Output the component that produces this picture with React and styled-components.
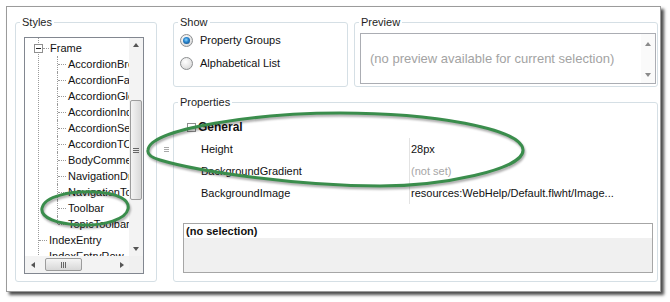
import React from 'react';
import styled, { createGlobalStyle, css } from 'styled-components';

const GlobalStyle = createGlobalStyle`
  html, body {
    margin: 0;
    padding: 0;
    background: #fff;
  }
  body {
    font-family: "Liberation Sans", Arial, sans-serif;
    font-size: 11px;
    color: #111;
  }
  * {
    box-sizing: border-box;
  }
`;

const Stage = styled.div`
  position: relative;
  width: 670px;
  height: 302px;
  padding: 6px 0 0 6px;
  overflow: hidden;
`;

const Window = styled.div`
  width: 655px;
  height: 286px;
  border: 1px solid #9b9b9b;
  background: #fff;
  box-shadow: 3px 3px 3px rgba(0, 0, 0, 0.7);
  display: grid;
  grid-template-columns: 142px 1fr;
  column-gap: 16px;
  padding: 15px 2px 9px 8px;
`;

const Group = styled.div`
  position: relative;
  border: 1px solid #d5dfe5;
  border-radius: 3px;
`;

const Legend = styled.span`
  position: absolute;
  top: -7px;
  left: 4px;
  padding: 0 2px;
  background: #fff;
  line-height: 13px;
  color: #1e1e1e;
`;

/* ---------- styles tree ---------- */

const StylesGroup = styled(Group)`
  padding: 14px 0 0 8px;
`;

const TreeBox = styled.div`
  width: 120px;
  height: 237px;
  border: 1px solid #828790;
  display: grid;
  grid-template-columns: 1fr 14px;
  grid-template-rows: 1fr 17px;
`;

const TreeList = styled.div`
  overflow: hidden;
  padding-top: 2px;
  background-image: linear-gradient(#9a9a9a 50%, transparent 50%);
  background-size: 1px 2px;
  background-repeat: repeat-y;
  background-position: 13px 0;
`;

const Row = styled.div`
  position: relative;
  height: 16px;
  line-height: 16px;
  white-space: nowrap;
  color: #111;
  padding-left: ${p => p.$indent}px;

  &::before {
    content: '';
    position: absolute;
    top: 8px;
    left: ${p => p.$stub}px;
    width: ${p => p.$stubW}px;
    border-top: 1px dotted #9a9a9a;
  }
`;

const ChildRow = styled(Row)`
  &::after {
    content: '';
    position: absolute;
    left: 32px;
    top: 0;
    height: ${p => (p.$last ? '8px' : '16px')};
    border-left: 1px dotted #9a9a9a;
  }
`;

const Expander = styled.span`
  position: absolute;
  left: ${p => p.$left}px;
  top: ${p => p.$top}px;
  width: 9px;
  height: 9px;
  border: 1px solid #8f8f8f;
  background: #fff;

  &::after {
    content: '';
    position: absolute;
    left: 1px;
    top: 3px;
    width: 5px;
    height: 1px;
    background: #222;
  }
`;

const VScroll = styled.div`
  display: flex;
  flex-direction: column;
  background: #f3f3f3;
`;

const HScroll = styled.div`
  display: flex;
  background: #f3f3f3;
`;

const Corner = styled.div`
  background: #f0f0f0;
`;

const ScrollButton = styled.div`
  flex: 0 0 ${p => p.$size}px;
  display: flex;
  align-items: center;
  justify-content: center;
  margin-left: ${p => (p.$end ? 'auto' : '0')};
`;

const Arrow = styled.span`
  width: 0;
  height: 0;
  ${p =>
    p.$dir === 'up' &&
    css`
      border-left: 3.5px solid transparent;
      border-right: 3.5px solid transparent;
      border-bottom: 4px solid ${p.$color || '#555'};
    `}
  ${p =>
    p.$dir === 'down' &&
    css`
      border-left: 3.5px solid transparent;
      border-right: 3.5px solid transparent;
      border-top: 4px solid ${p.$color || '#555'};
    `}
  ${p =>
    p.$dir === 'left' &&
    css`
      border-top: 3.5px solid transparent;
      border-bottom: 3.5px solid transparent;
      border-right: 4px solid ${p.$color || '#555'};
    `}
  ${p =>
    p.$dir === 'right' &&
    css`
      border-top: 3.5px solid transparent;
      border-bottom: 3.5px solid transparent;
      border-left: 4px solid ${p.$color || '#555'};
    `}
`;

const Track = styled.div`
  flex: 1;
  display: flex;
  flex-direction: ${p => (p.$vertical ? 'column' : 'row')};
  padding: ${p => (p.$vertical ? '48px 1px 0' : '2px 0 1px 5px')};
`;

const Thumb = styled.div`
  display: flex;
  align-items: center;
  justify-content: center;
  border: 1px solid #9c9c9c;
  border-radius: 2px;
  width: ${p => (p.$vertical ? '12px' : '37px')};
  height: ${p => (p.$vertical ? '100px' : '13px')};
  background: ${p =>
    p.$vertical
      ? 'linear-gradient(to right, #f4f4f4, #d8d8d8)'
      : 'linear-gradient(to bottom, #f4f4f4, #d8d8d8)'};
`;

const Grip = styled.span`
  width: ${p => (p.$vertical ? '6px' : '5px')};
  height: ${p => (p.$vertical ? '5px' : '6px')};
  background-image: ${p =>
    p.$vertical
      ? 'linear-gradient(#666 1px, transparent 1px)'
      : 'linear-gradient(to right, #666 1px, transparent 1px)'};
  background-size: ${p => (p.$vertical ? '6px 2px' : '2px 6px')};
`;

/* ---------- right side ---------- */

const RightCol = styled.div`
  display: flex;
  flex-direction: column;
  gap: 15px;
`;

const TopRow = styled.div`
  display: flex;
  gap: 6px;
  height: 65px;
`;

const ShowGroup = styled(Group)`
  width: 175px;
  padding: 7px 0 0 6px;
  display: flex;
  flex-direction: column;
  gap: 3px;
`;

const RadioRow = styled.label`
  display: flex;
  align-items: center;
  gap: 7px;
  height: 20px;
  color: #111;
`;

const RadioDot = styled.span`
  position: relative;
  width: 13px;
  height: 13px;
  border-radius: 50%;
  border: 1px solid #8c8e90;
  background: radial-gradient(circle at 40% 35%, #ffffff 0%, #e6e6e6 55%, #cfcfcf 100%);

  ${p =>
    p.$checked &&
    css`
      &::after {
        content: '';
        position: absolute;
        left: 2px;
        top: 2px;
        width: 7px;
        height: 7px;
        border-radius: 50%;
        background: radial-gradient(circle at 45% 40%, #8fd8ff 0%, #2a86cf 40%, #0f3f72 100%);
      }
    `}
`;

const PreviewGroup = styled(Group)`
  flex: 1;
  padding: 10px 1px 0 5px;
`;

const PreviewBox = styled.div`
  height: 51px;
  border: 1px solid #abadb3;
  display: flex;
`;

const PreviewText = styled.div`
  flex: 1;
  display: flex;
  align-items: center;
  padding-left: 9px;
  font-size: 13px;
  color: #a3a3a3;
`;

const MiniScroll = styled.div`
  width: 14px;
  display: flex;
  flex-direction: column;
  align-items: center;
  justify-content: space-between;
  padding: 8px 0 6px;
  background: #fafafa;
`;

const PropsGroup = styled(Group)`
  flex: 1;
  padding: 13px 4px 8px 9px;
  display: flex;
  flex-direction: column;
`;

const SplitGrip = styled.span`
  position: absolute;
  left: -10px;
  top: 44px;
  width: 5px;
  height: 5px;
  background-image: linear-gradient(#a8a8a8 1px, transparent 1px);
  background-size: 5px 2px;
`;

const CategoryRow = styled.div`
  position: relative;
  height: 22px;
  line-height: 22px;
  padding-left: 15px;
  font-size: 12px;
  font-weight: bold;
  color: #111;
`;

const PropRow = styled.div`
  display: grid;
  grid-template-columns: 226px 1fr;
  height: 22px;
  line-height: 22px;
`;

const PropName = styled.div`
  padding-left: 18px;
  color: #111;
`;

const PropValue = styled.div`
  border-left: 1px solid #e3e3e3;
  padding-left: 1px;
  white-space: nowrap;
  overflow: hidden;
  color: ${p => (p.$muted ? '#a6a6a6' : '#111')};
`;

const Description = styled.div`
  margin-top: 19px;
  height: 50px;
  border: 1px solid #a6a6a6;
  background: #f0f0f0;
`;

const DescTitle = styled.div`
  height: 14px;
  line-height: 14px;
  padding-left: 2px;
  background: #fff;
  font-weight: bold;
  color: #111;
`;

/* ---------- hand-drawn highlight ---------- */

const Annotation = styled.svg`
  position: absolute;
  left: 0;
  top: 0;
  pointer-events: none;
  filter: drop-shadow(1px 2px 1.2px rgba(0, 0, 0, 0.35));
`;

const Stroke = styled.path`
  fill: none;
  stroke: #3a8d4c;
  stroke-width: 3;
  stroke-linecap: round;
  stroke-linejoin: round;
`;

const children = [
  'AccordionBrowse',
  'AccordionFavorites',
  'AccordionGlossary',
  'AccordionIndex',
  'AccordionSearch',
  'AccordionTOC',
  'BodyComments',
  'NavigationDragBar',
  'NavigationTopicBar',
  'Toolbar',
  'TopicToolbar',
];

const properties = [
  { name: 'Height', value: '28px' },
  { name: 'BackgroundGradient', value: '(not set)', muted: true },
  { name: 'BackgroundImage', value: 'resources:WebHelp/Default.flwht/Image...' },
];

function StylesTree() {
  return (
    <TreeBox>
      <TreeList>
        <Row $indent={25} $stub={18} $stubW={6}>
          <Expander $left={9} $top={4} />
          Frame
        </Row>
        {children.map((name, i) => (
          <ChildRow
            key={name}
            $indent={43}
            $stub={33}
            $stubW={8}
            $last={i === children.length - 1}
          >
            {name}
          </ChildRow>
        ))}
        <Row $indent={24} $stub={14} $stubW={8}>
          IndexEntry
        </Row>
        <Row $indent={24} $stub={14} $stubW={8}>
          IndexEntryRow
        </Row>
      </TreeList>
      <VScroll>
        <ScrollButton $size={14}>
          <Arrow $dir="up" />
        </ScrollButton>
        <Track $vertical>
          <Thumb $vertical>
            <Grip $vertical />
          </Thumb>
        </Track>
        <ScrollButton $size={14}>
          <Arrow $dir="down" />
        </ScrollButton>
      </VScroll>
      <HScroll>
        <ScrollButton $size={15}>
          <Arrow $dir="left" />
        </ScrollButton>
        <Track>
          <Thumb>
            <Grip />
          </Thumb>
        </Track>
        <ScrollButton $size={15} $end>
          <Arrow $dir="right" />
        </ScrollButton>
      </HScroll>
      <Corner />
    </TreeBox>
  );
}

export default function App() {
  return (
    <>
      <GlobalStyle />
      <Stage>
        <Window>
          <StylesGroup>
            <Legend>Styles</Legend>
            <StylesTree />
          </StylesGroup>

          <RightCol>
            <TopRow>
              <ShowGroup>
                <Legend>Show</Legend>
                <RadioRow>
                  <RadioDot $checked />
                  Property Groups
                </RadioRow>
                <RadioRow>
                  <RadioDot />
                  Alphabetical List
                </RadioRow>
              </ShowGroup>

              <PreviewGroup>
                <Legend>Preview</Legend>
                <PreviewBox>
                  <PreviewText>(no preview available for current selection)</PreviewText>
                  <MiniScroll>
                    <Arrow $dir="up" $color="#8a8a8a" />
                    <Arrow $dir="down" $color="#8a8a8a" />
                  </MiniScroll>
                </PreviewBox>
              </PreviewGroup>
            </TopRow>

            <PropsGroup>
              <Legend>Properties</Legend>
              <SplitGrip />
              <CategoryRow>
                <Expander $left={4} $top={7} />
                General
              </CategoryRow>
              {properties.map(p => (
                <PropRow key={p.name}>
                  <PropName>{p.name}</PropName>
                  <PropValue $muted={p.muted}>{p.value}</PropValue>
                </PropRow>
              ))}
              <Description>
                <DescTitle>(no selection)</DescTitle>
              </Description>
            </PropsGroup>
          </RightCol>
        </Window>

        <Annotation width="670" height="302" viewBox="0 0 670 302">
          <Stroke d="M42,208 C45,196 70,191 95,192 C118,193 130,200 128,209 C126,219 105,226 80,225 C58,224 40,218 42,208 Z" />
          <Stroke d="M148,150 C150,128 260,113 340,113 C430,113 522,128 523,150 C524,170 440,186 380,186 C300,186 200,172 160,160 C150,157 147,154 148,150 Z" />
        </Annotation>
      </Stage>
    </>
  );
}
